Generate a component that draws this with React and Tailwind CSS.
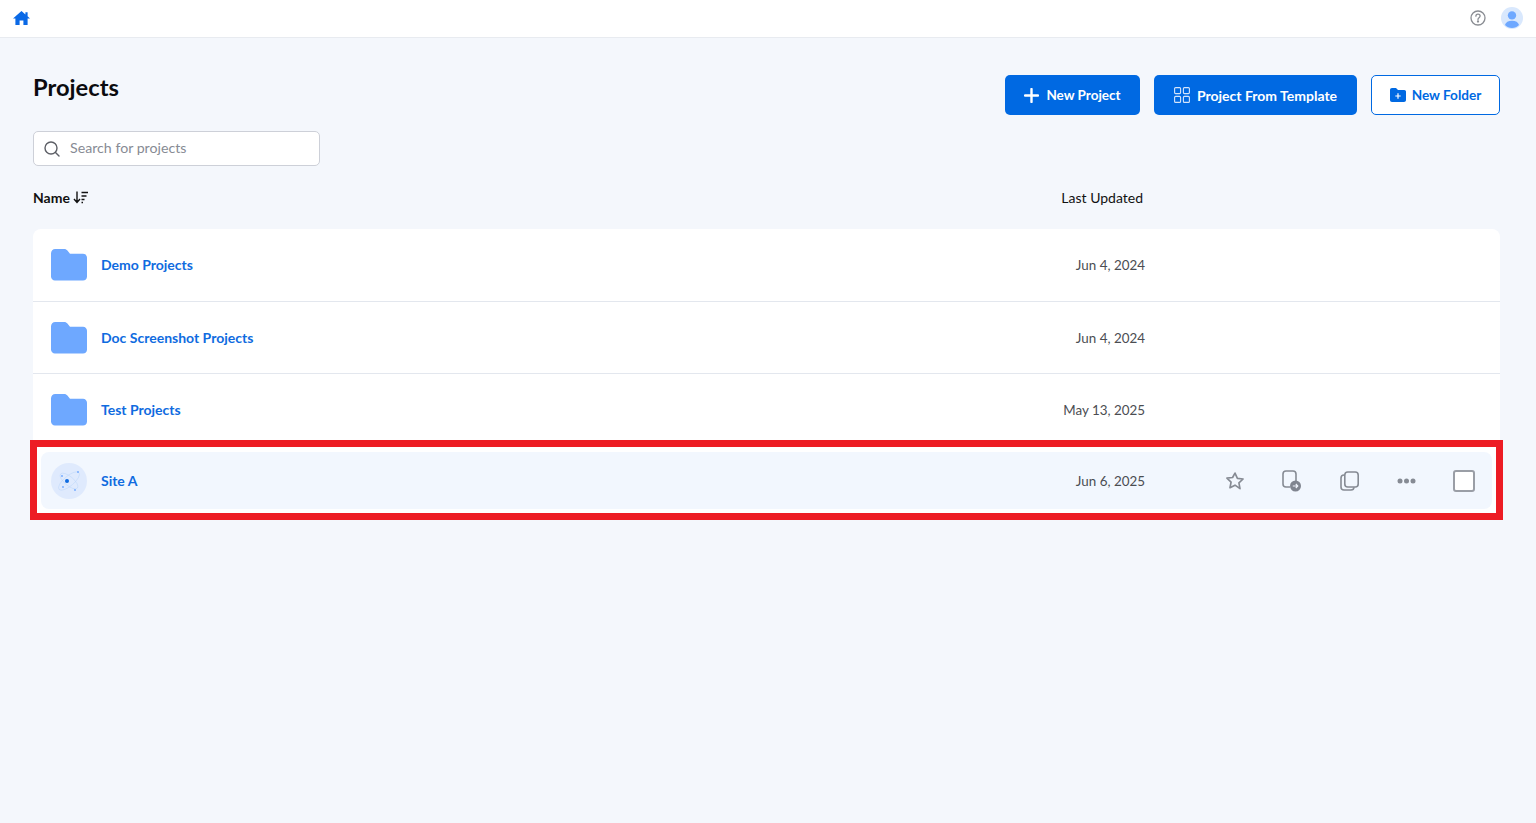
import React from "react";

const Folder = () => (
  <svg width="36" height="32" viewBox="0 0 36 32" className="shrink-0">
    <path d="M0 4.500C0 2 1.800 0 4.200 0h9c1.400 0 2.400.6 3.200 1.600L19 4.800h13c2.400 0 4 1.700 4 4V27.500c0 2.400-1.700 4-4 4H4c-2.300 0-4-1.700-4-4z" fill="#6ea8ff" />
  </svg>
);

const rows = [
  { name: "Demo Projects", date: "Jun 4, 2024", h: "h-[73px]", nudge: "-mt-[1px]", dateNudge: "" },
  { name: "Doc Screenshot Projects", date: "Jun 4, 2024", h: "h-[72px]", nudge: "", dateNudge: "pt-[1px]" },
  { name: "Test Projects", date: "May 13, 2025", h: "h-[72px]", nudge: "", dateNudge: "pt-[1px]" },
];

export default function App() {
  return (
    <div className="min-h-[823px] bg-[#f4f7fc] font-['Lato','Liberation_Sans',sans-serif] text-[14px] text-[#111]">
      <header className="h-[38px] pb-[1px] bg-white border-b border-[#e8ebf0] flex items-center justify-between pl-[13px] pr-[13px]">
        <svg width="17" height="14" viewBox="0 0 17 14" fill="#0a69e6">
          <path d="M8.500 0 0 7.400h2.400V14h4.200V9.500h3.800V14h4.200V7.400H17L14.600 5.300V1.200h-2.200v2.200z" />
        </svg>
        <div className="flex items-center gap-[15px]">
          <svg width="16" height="16" viewBox="0 0 16 16" fill="none" stroke="#8a8d93" strokeWidth="1.300">
            <circle cx="8" cy="8" r="7" />
            <path d="M5.900 6.200c0-1.200 1-2 2.100-2s2.100.8 2.100 1.900c0 1.600-2.100 1.700-2.100 3.300" strokeLinecap="round" />
            <circle cx="8" cy="11.500" r=".5" fill="#8a8d93" />
          </svg>
          <svg width="22" height="22" viewBox="0 0 21 21">
            <circle cx="10.500" cy="10.500" r="10.500" fill="#d9e8fd" />
            <circle cx="10.500" cy="8" r="4" fill="#6ea8ff" />
            <path d="M3.800 17.200c.6-2.600 3.300-4 6.700-4s6.100 1.400 6.700 4c-1.700 1.800-4 2.800-6.700 2.800s-5-1-6.700-2.800z" fill="#6ea8ff" />
          </svg>
        </div>
      </header>

      <main className="pl-[33px] pr-[36px]">
        <div className="flex items-start justify-between">
          <div>
            <h1 className="mt-[34px] text-[23.700px] leading-[30px] font-bold text-[#0b0b0f]">Projects</h1>
            <div className="mt-[29px] w-[287px] h-[35px] bg-white border border-[#cdd0d8] rounded-[5px] flex items-center pl-[10px] gap-[10px]">
              <svg width="16" height="16" viewBox="0 0 16 16" fill="none" stroke="#5d5f66" strokeWidth="1.400" strokeLinecap="round">
                <circle cx="7" cy="7" r="6" />
                <path d="m11.500 11.500 3.500 3.500" />
              </svg>
              <span className="text-[#878b94] text-[14.200px] leading-[20px] -mt-[1px]">Search for projects</span>
            </div>
          </div>
          <div className="flex items-center mt-[37px]">
            <button className="h-[40px] w-[135px] rounded-[5px] bg-[#0069e2] text-white text-[13.500px] font-bold flex items-center justify-center gap-[7px]">
              <svg width="15" height="15" viewBox="0 0 15 15" stroke="#fff" strokeWidth="2.400" strokeLinecap="round">
                <path d="M7.500 1v13M1 7.500h13" />
              </svg>
              New Project
            </button>
            <button className="ml-[14px] h-[40px] w-[203px] rounded-[5px] bg-[#0069e2] text-white font-bold flex items-center justify-center gap-[7px]">
              <svg width="16" height="16" viewBox="0 0 16 16" fill="none" stroke="#d5e5fb" strokeWidth="1.100">
                <rect x=".6" y=".6" width="6" height="6" rx="1" />
                <rect x="9.400" y=".6" width="6" height="6" rx="1" />
                <rect x=".6" y="9.400" width="6" height="6" rx="1" />
                <rect x="9.400" y="9.400" width="6" height="6" rx="1" />
              </svg>
              Project From Template
            </button>
            <button className="ml-[14px] h-[40px] w-[129px] rounded-[5px] bg-white border border-[#0069e2] text-[#0069e2] text-[13.600px] font-bold flex items-center justify-center gap-[6px]">
              <svg width="16" height="14" viewBox="0 0 16 14" className="-mt-[1px]">
                <path d="M0 2c0-1.100.8-2 2-2h4l2 2h6.300c1 0 1.700.8 1.700 1.800V12c0 1.100-.8 2-2 2H2c-1.200 0-2-.9-2-2z" fill="#0069e2" />
                <path d="M8 5.300v5.400M5.300 8h5.400" stroke="#fff" strokeWidth="1.200" />
              </svg>
              New Folder
            </button>
          </div>
        </div>

        <div className="mt-[21px] h-[20px] flex items-center justify-between">
          <span className="font-bold flex items-center gap-[3px]">
            Name
            <svg width="15" height="13" viewBox="0 0 15 13" fill="none" stroke="#111" strokeWidth="1.400">
              <path d="M4 .5v10.500M1 8l3 3.500L7 8M8.500 1.500H15M8.500 5h5M8.500 8.500h3M8.500 11.500h1.500" />
            </svg>
          </span>
          <span className="mr-[357px]">Last Updated</span>
        </div>

        <div className="mt-[22px] bg-white rounded-t-[8px]">
          {rows.map((r) => (
            <div key={r.name} className={`${r.h} border-b border-[#e3e7ee] flex items-center pl-[18px]`}>
              <Folder />
              <span className={`ml-[14px] font-bold text-[#0f6be0] ${r.nudge}`}>{r.name}</span>
              <span className={`ml-auto mr-[355px] text-[13.400px] text-[#4b4d52] ${r.dateNudge}`}>{r.date}</span>
            </div>
          ))}

          <div className="relative h-[72px] px-[8px] py-[6px]">
            <div className="h-[57px] bg-[#f2f7fe] rounded-[8px] flex items-center pl-[10px] pr-[17px]">
              <svg width="36" height="36" viewBox="0 0 36 36" className="shrink-0">
                <circle cx="18" cy="18" r="18" fill="#dfeafd" />
                <circle cx="16" cy="18" r="2" fill="#0f6be0" />
                <g fill="none" stroke="#b3d0f8" strokeWidth=".4">
                  <ellipse cx="18" cy="18" rx="13" ry="5" transform="rotate(-40 18 18)" />
                  <ellipse cx="18" cy="18" rx="11" ry="4.500" transform="rotate(40 18 18)" />
                </g>
                <circle cx="27" cy="9" r=".9" fill="#6ea8ff" />
                <circle cx="11" cy="13" r=".9" fill="#6ea8ff" />
                <circle cx="12" cy="24" r=".9" fill="#6ea8ff" />
                <circle cx="24" cy="27" r=".9" fill="#6ea8ff" />
              </svg>
              <span className="ml-[14px] font-bold text-[#0f6be0]">Site A</span>
              <span className="ml-auto pt-[1px] text-[13.400px] text-[#4b4d52]">Jun 6, 2025</span>
              <div className="ml-[80px] flex items-center text-[#8a8f98]">
                <svg width="20" height="20" viewBox="0 0 24 24" fill="none" stroke="#868b94" strokeWidth="2" strokeLinejoin="round">
                  <path d="m12 2.500 2.900 6.300 6.800.8-5 4.700 1.300 6.800L12 17l-6 3.100 1.300-6.800-5-4.700 6.800-.8z" />
                </svg>
                <svg className="ml-[37px]" width="20" height="22" viewBox="0 0 20 22" fill="none">
                  <path d="M8 17H4a3 3 0 0 1-3-3V4a3 3 0 0 1 3-3h7a3 3 0 0 1 3 3v7" stroke="#868b94" strokeWidth="1.600" />
                  <circle cx="13.500" cy="16" r="5.500" fill="#808590" />
                  <path d="M10.800 16h5M13.800 14l2 2-2 2" stroke="#f1f6fe" strokeWidth="1.100" />
                </svg>
                <svg className="ml-[38px]" width="19" height="20" viewBox="0 0 19 20" fill="none" stroke="#868b94" strokeWidth="1.600">
                  <rect x="4.800" y="1" width="13.400" height="15" rx="3" />
                  <path d="M4.800 4H4a3 3 0 0 0-3 3v9a3 3 0 0 0 3 3h7a3 3 0 0 0 3-2.800" />
                </svg>
                <svg className="ml-[38px]" width="19" height="6" viewBox="0 0 19 6" fill="#868b94">
                  <circle cx="3" cy="3" r="2.500" />
                  <circle cx="9.500" cy="3" r="2.500" />
                  <circle cx="16" cy="3" r="2.500" />
                </svg>
                <div className="ml-[37px] w-[22px] h-[22px] bg-white border-2 border-[#9a9ea6] rounded-[3px]" />
              </div>
            </div>
            <div className="absolute -left-[3px] -right-[3px] -top-[6px] h-[80px] border-[7px] border-[#ed1c24]" />
          </div>
        </div>
      </main>
    </div>
  );
}
